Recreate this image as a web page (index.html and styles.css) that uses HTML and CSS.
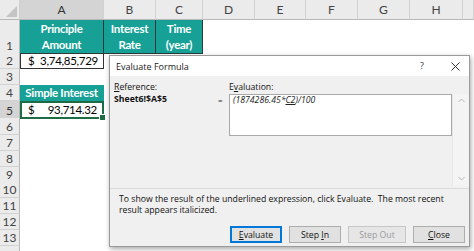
FILE: index.html
```html
<!DOCTYPE html>
<html>
<head>
<meta charset="utf-8">
<link rel="stylesheet" href="styles.css">
</head>
<body>
<div class="sheet">
  <div class="row rh-row">
    <div class="corner"><span class="tri"></span></div>
    <div class="ch sel">A</div>
    <div class="ch">B</div>
    <div class="ch">C</div>
    <div class="ch">D</div>
    <div class="ch">E</div>
    <div class="ch">F</div>
    <div class="ch">G</div>
    <div class="ch">H</div>
    <div class="ch"></div>
  </div>
  <div class="row h33">
    <div class="rh">1</div>
    <div class="cell teal two">Principle<br>Amount</div>
    <div class="cell teal two">Interest<br>Rate</div>
    <div class="cell teal two">Time<br>(year)</div>
  </div>
  <div class="row h16">
    <div class="rh">2</div>
    <div class="cell money boxed"><span>$</span><span>3,74,85,729</span></div>
  </div>
  <div class="row h16"><div class="rh">3</div></div>
  <div class="row h16">
    <div class="rh">4</div>
    <div class="cell teal single">Simple Interest</div>
  </div>
  <div class="row h17">
    <div class="rh selrow">5</div>
    <div class="cell money active"><span>$</span><span>93,714.32</span><i class="handle"></i></div>
  </div>
  <div class="row h17"><div class="rh">6</div></div>
  <div class="row h16"><div class="rh">7</div></div>
  <div class="row h16"><div class="rh">8</div></div>
  <div class="row h15"><div class="rh">9</div></div>
  <div class="row h16"><div class="rh">10</div></div>
  <div class="row h16"><div class="rh">11</div></div>
  <div class="row h16"><div class="rh">12</div></div>
  <div class="row h16"><div class="rh">13</div></div>
  <div class="row h16"><div class="rh"></div></div>
</div>

<div class="dialog">
  <div class="titlebar">
    <span class="title">Evaluate Formula</span>
    <span class="controls">
      <span class="help">?</span>
      <span class="closebox"><svg width="9" height="9" viewBox="0 0 9 9"><path d="M0.5 0.5 L8.5 8.5 M8.5 0.5 L0.5 8.5" stroke="#333" stroke-width="1" fill="none"/></svg></span>
    </span>
  </div>
  <div class="dbody">
    <div class="top">
      <div class="refcol">
        <div class="lbl"><u>R</u>eference:</div>
        <div class="refval">Sheet6!$A$5</div>
      </div>
      <div class="eq">=</div>
      <div class="evalcol">
        <div class="lbl">E<u>v</u>aluation:</div>
        <div class="evalarea">
          <div class="boxcol">
            <div class="evalbox"><i>(1874286.45*<u>C2</u>)/100</i></div>
          </div>
          <div class="scroll">
            <svg width="7" height="5" viewBox="0 0 7 5"><path d="M0.5 4 L3.5 1 L6.5 4" stroke="#b5b5b5" fill="none"/></svg>
            <svg width="7" height="5" viewBox="0 0 7 5"><path d="M0.5 1 L3.5 4 L6.5 1" stroke="#b5b5b5" fill="none"/></svg>
          </div>
        </div>
      </div>
    </div>
    <div class="info">
      <p>To show the result of the underlined expression, click Evaluate.&nbsp; The most recent</p>
      <p>result appears italicized.</p>
    </div>
    <div class="buttons">
      <button class="btn def"><u>E</u>valuate</button>
      <button class="btn">Step <u>I</u>n</button>
      <button class="btn dis">Step Out</button>
      <button class="btn"><u>C</u>lose</button>
    </div>
  </div>
</div>
</body>
</html>
```
FILE: styles.css
```css
html, body {
  margin: 0;
  padding: 0;
  background: #fff;
  overflow: hidden;
  width: 474px;
  height: 251px;
}
body {
  font-family: Lato, "Liberation Sans", sans-serif;
  position: relative;
}
.sheet {
  display: flex;
  flex-direction: column;
}
.row {
  display: grid;
  grid-template-columns: 20px 84px 52px 47px 52px 51px 52px 52px 53px 1fr;
}
.rh-row { height: 20px; }
.h33 { height: 33px; }
.h17 { height: 17px; }
.h16 { height: 16px; }
.h15 { height: 15px; }

.corner {
  background: #ebebeb;
  border-right: 1px solid #cfcfcf;
  border-bottom: 1px solid #b8b8b8;
  position: relative;
}
.tri {
  position: absolute;
  right: 2px;
  bottom: 2px;
  width: 0;
  height: 0;
  border-left: 11px solid transparent;
  border-bottom: 11px solid #c4c4c4;
}
.ch {
  background: #ebebeb;
  border-right: 1px solid #d2d2d2;
  border-bottom: 1px solid #b8b8b8;
  color: #444;
  font-size: 12px;
  display: flex;
  align-items: center;
  justify-content: center;
}
.ch.sel { background: #d4d4d4; color: #333; }
.rh {
  background: #ebebeb;
  border-right: 1px solid #b8b8b8;
  border-bottom: 1px solid #d2d2d2;
  color: #444;
  font-size: 12px;
  display: flex;
  align-items: flex-end;
  justify-content: center;
  line-height: 15px;
  box-sizing: border-box;
}
.rh.selrow { background: #d4d4d4; color: #333; }
.cell {
  box-sizing: border-box;
  font-size: 11.5px;
  letter-spacing: -0.3px;
  color: #000;
}
.teal {
  background: #16a096;
  color: #fff;
  font-weight: 700;
  text-align: center;
  border-right: 1px solid #2d3a38;
  border-bottom: 1px solid #2d3a38;
}
.two {
  line-height: 16px;
  padding-top: 1px;
}
.single {
  line-height: 15px;
  border-bottom: none;
  border-right-color: #16a096;
}
.money {
  display: flex;
  justify-content: space-between;
  align-items: center;
  padding: 0 5px 0 7px;
  line-height: 14px;
  position: relative;
}
.boxed {
  border: 1px solid #333;
  border-top: none;
}
.active {
  border: 2px solid #1f6b45;
  padding-left: 6px;
}
.handle {
  position: absolute;
  right: -4px;
  bottom: -4px;
  width: 5px;
  height: 5px;
  background: #1f6b45;
  border: 1px solid #fff;
}

/* dialog */
.dialog {
  position: absolute;
  left: 109px;
  top: 55px;
  width: 361px;
  height: 192px;
  box-sizing: border-box;
  border: 1px solid #9a9a9a;
  background: #f0f0f0;
  box-shadow: 1px 2px 5px rgba(0,0,0,0.35);
  font-family: "Open Sans", "Noto Sans", sans-serif;
  font-size: 8.7px;
  color: #111;
  display: flex;
  flex-direction: column;
}
.titlebar {
  height: 20px;
  background: #fff;
  display: flex;
  justify-content: space-between;
  align-items: center;
  padding: 0 9px 0 6px;
  flex: none;
}
.title {
  font-size: 9px;
  color: #222;
}
.controls {
  display: flex;
  align-items: center;
  gap: 26px;
}
.help {
  font-size: 9px;
  color: #333;
  line-height: 10px;
  width: 5px;
}
.closebox {
  display: flex;
  width: 9px;
  height: 9px;
}
.dbody {
  flex: 1;
  display: flex;
  flex-direction: column;
}
.top {
  display: flex;
  padding-top: 5px;
  padding-left: 4px;
}
.lbl {
  line-height: 12px;
  height: 12px;
}
.refcol {
  width: 104px;
}
.refval {
  font-weight: 700;
  line-height: 12px;
}
.eq {
  width: 10px;
  padding-top: 13px;
  line-height: 12px;
  font-size: 8px;
  color: #333;
}
.evalcol {
  display: flex;
  flex-direction: column;
  padding-left: 1px;
}
.evalarea {
  display: flex;
  margin-top: 1px;
  height: 92px;
}
.boxcol {
  width: 223px;
}
.evalbox {
  height: 42px;
  box-sizing: border-box;
  background: #fff;
  border: 1px solid #a9a9a9;
  padding: 0 3px;
  line-height: 11px;
  color: #222;
}
.evalbox i { font-style: italic; }
.scroll {
  width: 17px;
  background: #f4f4f4;
  border-left: 1px solid #e6e6e6;
  display: flex;
  flex-direction: column;
  justify-content: space-between;
  align-items: center;
  padding: 4px 0 5px;
  box-sizing: border-box;
}
.info {
  margin-top: 2px;
  border-top: 1px solid #dcdcdc;
  padding: 5px 0 0 9px;
}
.info p {
  margin: 0;
  line-height: 10.5px;
  white-space: nowrap;
}
.buttons {
  display: flex;
  justify-content: flex-end;
  gap: 7px;
  padding: 11px 4px 0 0;
}
.btn {
  font-family: "Open Sans", "Noto Sans", sans-serif;
  font-size: 8.7px;
  height: 17px;
  width: 52px;
  padding: 0;
  background: #e1e1e1;
  border: 1px solid #adadad;
  color: #111;
  line-height: 14px;
}
.btn.def {
  border: 1px solid #0078d7;
  box-shadow: inset 0 0 0 1px #0078d7;
}
.btn.dis {
  color: #9a9a9a;
  background: #e6e6e6;
  border-color: #c6c6c6;
  width: 58px;
}
```
